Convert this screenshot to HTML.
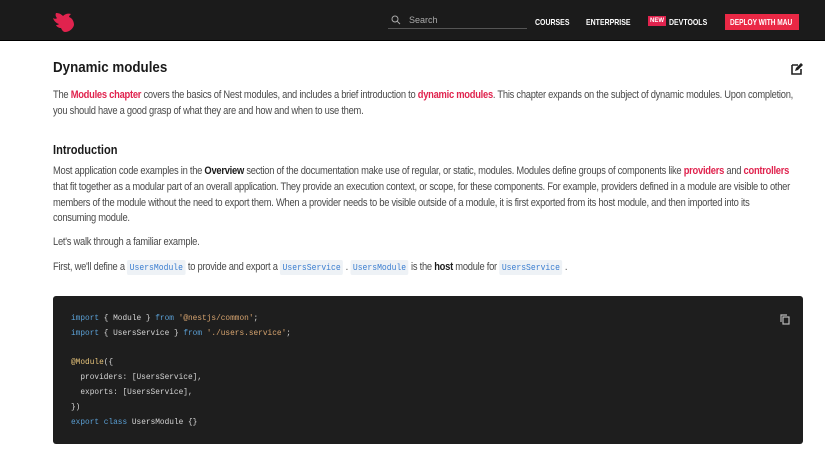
<!DOCTYPE html>
<html><head><meta charset="utf-8"><style>
*{margin:0;padding:0;box-sizing:border-box}
body{width:825px;height:450px;overflow:hidden;background:#fff;font-family:"Liberation Sans",sans-serif;color:#404040;position:relative}
.nav{position:absolute;left:0;top:0;width:825px;height:41px;background:#1b1b1b;border-bottom:1px solid #000}
.nv{position:absolute;color:#fff;font-size:8.5px;font-weight:bold;top:17px;white-space:nowrap;transform:scaleX(0.82);transform-origin:left}
.l{position:absolute;left:53px;white-space:nowrap;font-size:11px;letter-spacing:-0.3px;color:#4a4a4a;transform:scaleX(0.85);transform-origin:left}
.r{color:#e0234e;font-weight:bold}
b{color:#1a1a1a}
code{font-family:"Liberation Mono",monospace;font-size:9.5px;color:#3b7ed0;background:#eef2f6;padding:2px 3px;border-radius:2px;letter-spacing:0}
.code{position:absolute;left:53px;top:296px;width:750px;height:148px;background:#1e1e1e;border-radius:3px}
.cl{position:absolute;left:18px;white-space:pre;font-family:"Liberation Mono",monospace;font-size:7.8px;color:#d4d4d4}
.k{color:#5a9fd4}.s{color:#d7a46f}.d{color:#e7c47a}
</style></head><body>
<div class="nav">
<svg style="position:absolute;left:53px;top:11px" width="22" height="21" viewBox="0 0 22 21"><path d="M3 2c3 0 5 1 7 3 2-2 5-3 8-2-1 1-2 2-2 3 3 1 5 4 5 8-1 4-5 7-9 7-2 0-3-2-4-4-2 0-4-1-5-3 1 0 2 0 3-1-3-1-5-3-6-6 2 1 3 1 4 0C3 6 2 4 3 2z" fill="#e0234e"/></svg>
<svg style="position:absolute;left:391px;top:15px" width="10" height="10" viewBox="0 0 10 10"><circle cx="4" cy="4" r="3" stroke="#aaa" fill="none"/><path d="M6.3 6.3L9 9" stroke="#aaa"/></svg>
<div style="position:absolute;left:409px;top:15px;color:#aaa;font-size:9px">Search</div>
<div style="position:absolute;left:388px;top:28px;width:139px;height:1px;background:#555"></div>
<div class="nv" style="left:535px">COURSES</div>
<div class="nv" style="left:586px">ENTERPRISE</div>
<div style="position:absolute;left:648px;top:16px;background:#e0234e;color:#fff;font-size:6px;font-weight:bold;padding:2px 2px">NEW</div>
<div class="nv" style="left:669px">DEVTOOLS</div>
<div style="position:absolute;left:725px;top:14px;width:74px;height:16px;background:#ea2845"></div>
<div class="nv" style="left:730px;top:18px;font-size:8px">DEPLOY WITH MAU</div>
</div>
<div style="position:absolute;left:53px;top:59px;font-size:15px;font-weight:bold;color:#1a1a1a;transform:scaleX(0.89);transform-origin:left;white-space:nowrap">Dynamic modules</div>
<svg style="position:absolute;left:791px;top:63px" width="12" height="12" viewBox="0 0 12 12"><path d="M1 2h6M1 2v9h9V6" stroke="#222" stroke-width="1.6" fill="none"/><path d="M4 8l1-3 5-5 2 2-5 5z" fill="#222"/></svg>
<div class="l" style="top:89px">The <span class="r">Modules chapter</span> covers the basics of Nest modules, and includes a brief introduction to <span class="r">dynamic modules</span>. This chapter expands on the subject of dynamic modules. Upon completion,</div>
<div class="l" style="top:105px">you should have a good grasp of what they are and how and when to use them.</div>
<div style="position:absolute;left:53px;top:142px;font-size:13px;font-weight:bold;color:#1a1a1a;transform:scaleX(0.85);transform-origin:left;white-space:nowrap">Introduction</div>
<div class="l" style="top:165px">Most application code examples in the <b>Overview</b> section of the documentation make use of regular, or static, modules. Modules define groups of components like <span class="r">providers</span> and <span class="r">controllers</span></div>
<div class="l" style="top:181px">that fit together as a modular part of an overall application. They provide an execution context, or scope, for these components. For example, providers defined in a module are visible to other</div>
<div class="l" style="top:197px">members of the module without the need to export them. When a provider needs to be visible outside of a module, it is first exported from its host module, and then imported into its</div>
<div class="l" style="top:212px">consuming module.</div>
<div class="l" style="top:236px">Let's walk through a familiar example.</div>
<div class="l" style="top:261px">First, we'll define a <code>UsersModule</code> to provide and export a <code>UsersService</code> . <code>UsersModule</code> is the <b>host</b> module for <code>UsersService</code> .</div>
<div class="code">
<div class="cl" style="top:19px"><span class="k">import</span> { Module } <span class="k">from</span> <span class="s">'@nestjs/common'</span>;</div>
<div class="cl" style="top:34px"><span class="k">import</span> { UsersService } <span class="k">from</span> <span class="s">'./users.service'</span>;</div>
<div class="cl" style="top:63px"><span class="d">@Module</span>({</div>
<div class="cl" style="top:78px">  providers: [UsersService],</div>
<div class="cl" style="top:93px">  exports: [UsersService],</div>
<div class="cl" style="top:108px">})</div>
<div class="cl" style="top:123px"><span class="k">export</span> <span class="k">class</span> UsersModule {}</div>
<svg style="position:absolute;left:727px;top:18px" width="10" height="11" viewBox="0 0 10 11"><rect x="3" y="3" width="6" height="7" stroke="#bbb" fill="none" stroke-width="1.2"/><path d="M1 8V1h6" stroke="#bbb" fill="none" stroke-width="1.2"/></svg>
</div>
</body></html>
